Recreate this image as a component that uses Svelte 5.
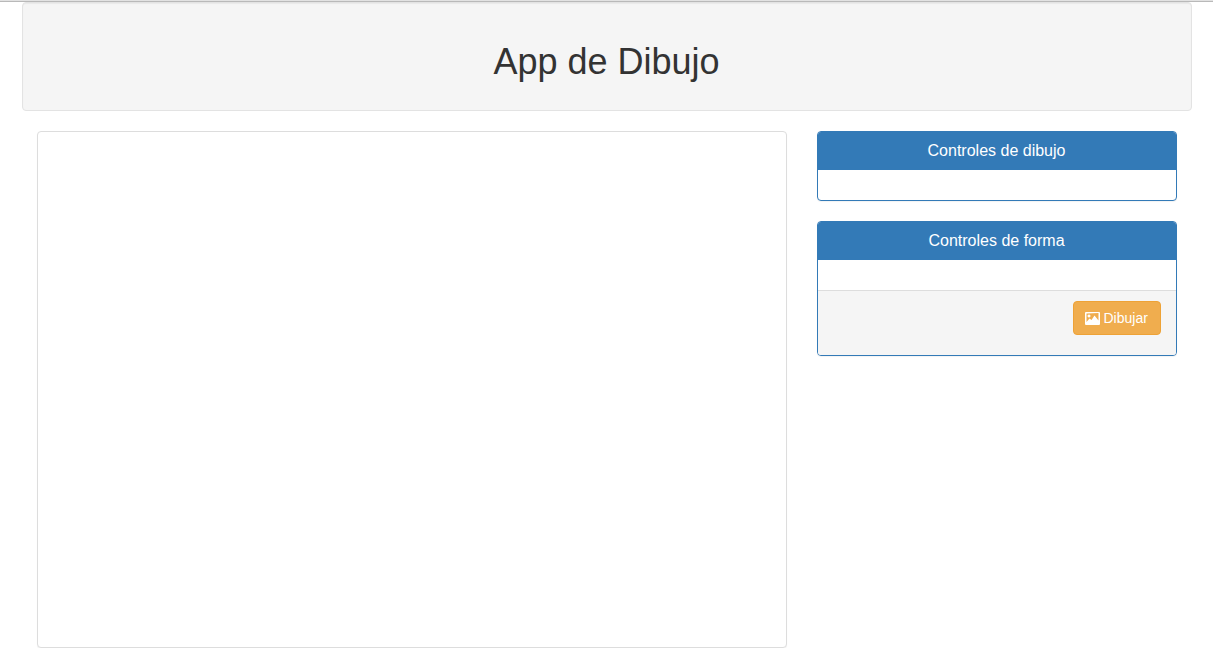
<script>
	const panels = [
		{ title: "Controles de dibujo", footer: false },
		{ title: "Controles de forma", footer: true },
	];
</script>

<div class="topline"></div>
<div class="container">
	<header class="well">
		<h1>App de Dibujo</h1>
	</header>

	<div class="row">
		<main class="canvas-col">
			<div class="canvas"></div>
		</main>

		<aside class="side-col">
			{#each panels as panel}
				<section class="panel">
					<div class="panel-heading">{panel.title}</div>
					<div class="panel-body"></div>
					{#if panel.footer}
						<div class="panel-footer">
							<button class="btn">
								<svg class="icon" viewBox="0 0 15 13" width="15" height="13" aria-hidden="true">
									<path
										fill="#fff"
										fill-rule="evenodd"
										d="M0 1a1 1 0 0 1 1-1h13a1 1 0 0 1 1 1v11a1 1 0 0 1-1 1H1a1 1 0 0 1-1-1zM1.500 1.500v8.500l3-3.500 2 1.500 3-4.500 4 5v-7.500zM4 2.500a1.500 1.500 0 1 0 .01 0z"
									/>
								</svg>
								Dibujar
							</button>
						</div>
					{/if}
				</section>
			{/each}
		</aside>
	</div>
</div>

<style>
	:global(body) {
		margin: 0;
		background: #fff;
		font-family: "Liberation Sans", Arial, sans-serif;
		font-size: 14px;
		line-height: 1.42857143;
		color: #333;
	}

	.topline {
		height: 1px;
		background: #b9b9b9;
		border-top: 1px solid #e2e2e2;
	}

	.container {
		width: 1170px;
		margin: 0 auto;
	}

	.well {
		padding: 19px;
		margin-bottom: 20px;
		background: #f5f5f5;
		border: 1px solid #e3e3e3;
		border-radius: 4px;
		box-shadow: inset 0 1px 1px rgba(0, 0, 0, 0.05);
	}

	h1 {
		margin: 20px 0 10px;
		font-size: 36px;
		font-weight: 500;
		line-height: 39px;
		text-align: center;
	}

	.row {
		display: flex;
		align-items: flex-start;
	}

	.canvas-col {
		box-sizing: border-box;
		width: 780px;
		padding: 0 15px;
	}

	.canvas {
		height: 515px;
		background: #fff;
		border: 1px solid #ddd;
		border-radius: 4px;
		box-shadow: 0 1px 1px rgba(0, 0, 0, 0.05);
	}

	.side-col {
		box-sizing: border-box;
		width: 390px;
		padding: 0 15px;
	}

	.panel {
		margin-bottom: 20px;
		background: #fff;
		border: 1px solid #337ab7;
		border-radius: 4px;
		box-shadow: 0 1px 1px rgba(0, 0, 0, 0.05);
	}

	.panel-heading {
		padding: 10px 15px;
		background: #337ab7;
		border-bottom: 1px solid #337ab7;
		border-radius: 3px 3px 0 0;
		color: #fff;
		font-size: 16px;
		line-height: 17px;
		text-align: center;
	}

	.panel-body {
		height: 30px;
	}

	.panel-footer {
		display: flex;
		justify-content: flex-end;
		padding: 10px 15px 20px;
		background: #f5f5f5;
		border-top: 1px solid #ddd;
		border-radius: 0 0 3px 3px;
	}

	.btn {
		display: inline-flex;
		align-items: center;
		gap: 4px;
		box-sizing: border-box;
		width: 88px;
		height: 34px;
		padding: 0 0 0 11px;
		background: #f0ad4e;
		border: 1px solid #eea236;
		border-radius: 4px;
		color: #fff;
		font-family: inherit;
		font-size: 14px;
		line-height: 1.42857143;
	}

	.icon {
		flex: none;
	}
</style>
